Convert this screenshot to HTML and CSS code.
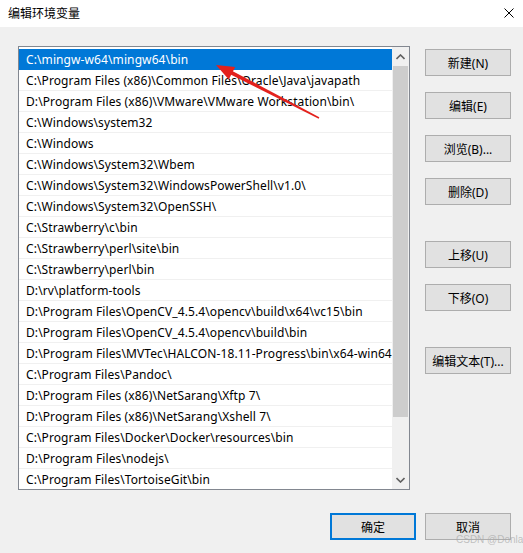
FILE: index.html
```html
<!DOCTYPE html>
<html lang="zh-CN">
<head>
<meta charset="UTF-8" />
<title>编辑环境变量</title>
<link rel="stylesheet" href="styles.css">
</head>
<body>

<div class="dialog">
  <div class="titlebar">
    <span class="title">编辑环境变量</span>
    <svg class="close" width="10" height="10" viewBox="0 0 10 10">
      <path d="M0.5 0.5 L9.5 9.5 M9.5 0.5 L0.5 9.5" stroke="#000" stroke-width="1" fill="none" />
    </svg>
  </div>

  <div class="content">
    <div class="main">
      <div class="listbox">
        <ul class="paths">
          <li class="selected">C:\mingw-w64\mingw64\bin</li>
          <li>C:\Program Files (x86)\Common Files\Oracle\Java\javapath</li>
          <li>D:\Program Files (x86)\VMware\VMware Workstation\bin\</li>
          <li>C:\Windows\system32</li>
          <li>C:\Windows</li>
          <li>C:\Windows\System32\Wbem</li>
          <li>C:\Windows\System32\WindowsPowerShell\v1.0\</li>
          <li>C:\Windows\System32\OpenSSH\</li>
          <li>C:\Strawberry\c\bin</li>
          <li>C:\Strawberry\perl\site\bin</li>
          <li>C:\Strawberry\perl\bin</li>
          <li>D:\rv\platform-tools</li>
          <li>D:\Program Files\OpenCV_4.5.4\opencv\build\x64\vc15\bin</li>
          <li>D:\Program Files\OpenCV_4.5.4\opencv\build\bin</li>
          <li>D:\Program Files\MVTec\HALCON-18.11-Progress\bin\x64-win64</li>
          <li>C:\Program Files\Pandoc\</li>
          <li>D:\Program Files (x86)\NetSarang\Xftp 7\</li>
          <li>D:\Program Files (x86)\NetSarang\Xshell 7\</li>
          <li>C:\Program Files\Docker\Docker\resources\bin</li>
          <li>D:\Program Files\nodejs\</li>
          <li>C:\Program Files\TortoiseGit\bin</li>
        </ul>
        <div class="scrollbar">
          <div class="arrow">
            <svg width="9" height="6" viewBox="0 0 9 6"><path d="M0.5 5 L4.5 1 L8.5 5" stroke="#606060" stroke-width="1.6" fill="none" /></svg>
          </div>
          <div class="track">
            <div class="thumb"></div>
          </div>
          <div class="arrow">
            <svg width="9" height="6" viewBox="0 0 9 6"><path d="M0.5 1 L4.5 5 L8.5 1" stroke="#606060" stroke-width="1.6" fill="none" /></svg>
          </div>
        </div>
      </div>

      <div class="side-buttons">
        <button>新建(N)</button>
        <button>编辑(E)</button>
        <button>浏览(B)...</button>
        <button>删除(D)</button>
        <button class="group-start">上移(U)</button>
        <button>下移(O)</button>
        <button class="group-start">编辑文本(T)...</button>
      </div>
    </div>

    <div class="footer">
      <button class="default">确定</button>
      <button>取消</button>
    </div>
  </div>

  <!-- 红色箭头标注 -->
  <svg class="annotation" width="523" height="553" viewBox="0 0 523 553">
    <polygon points="229.1,73.8 230.9,70.2 319.3,117.3 318.7,118.7" fill="#e3211c" />
    <polygon points="216,65 235.2,67 228.8,79.4" fill="#e3211c" />
  </svg>

  <span class="watermark">CSDN @Donla</span>
</div>

</body>
</html>
```

FILE: styles.css
```css
html, body {
  margin: 0;
  padding: 0;
}
body {
  font-family: "Noto Sans", "Noto Sans CJK SC", sans-serif;
  font-size: 12px;
  color: #000;
  background-color: #f0f0f0;
}
.dialog {
  position: relative;
  width: 523px;
  height: 553px;
  overflow: hidden;
  background-color: #f0f0f0;
}
.titlebar {
  height: 27px;
  background-color: #fff;
  display: flex;
  align-items: center;
  justify-content: space-between;
  padding: 0 8px 2px 8px;
  box-sizing: border-box;
}
.title {
  font-family: "Noto Sans CJK SC", sans-serif;
  font-size: 12px;
}
.close {
  margin-right: 1px;
}
.content {
  padding: 19px 0 0 18px;
}
.main {
  display: flex;
  gap: 15px;
}
.listbox {
  width: 392px;
  height: 444px;
  box-sizing: border-box;
  border: 1px solid #828790;
  background-color: #fff;
  display: flex;
  padding-top: 2px;
}
.paths {
  list-style: none;
  margin: 0;
  padding: 0;
  flex: 1;
  overflow: hidden;
}
.paths li {
  height: 21px;
  line-height: 20px;
  box-sizing: border-box;
  border-bottom: 1px solid #f0f0f0;
  padding: 1px 0 0 7px;
  white-space: nowrap;
  overflow: hidden;
  letter-spacing: 0.1px;
}
.paths li.selected {
  background-color: #0078d7;
  color: #fff;
  border-bottom-color: #0078d7;
}
.scrollbar {
  width: 17px;
  margin-top: -2px;
  background-color: #f0f0f0;
  display: flex;
  flex-direction: column;
}
.arrow {
  height: 19px;
  display: flex;
  align-items: center;
  justify-content: center;
}
.track {
  flex: 1;
}
.thumb {
  height: 351px;
  margin: 0 1px;
  background-color: #cdcdcd;
}
.side-buttons {
  display: flex;
  flex-direction: column;
  gap: 16px;
  padding-top: 3px;
}
.side-buttons .group-start {
  margin-top: 20px;
}
button {
  width: 86px;
  height: 27px;
  padding: 0;
  font-family: "Noto Sans", "Noto Sans CJK SC", sans-serif;
  font-size: 12px;
  color: #000;
  background-color: #e1e1e1;
  border: 1px solid #adadad;
  border-radius: 0;
}
button.default {
  border: 2px solid #0078d7;
}
.footer {
  display: flex;
  justify-content: flex-end;
  gap: 9px;
  padding: 23px 12px 0 0;
}
.annotation {
  position: absolute;
  left: 0;
  top: 0;
  pointer-events: none;
}
.watermark {
  position: absolute;
  left: 456px;
  top: 534px;
  white-space: nowrap;
  font-family: "Liberation Sans", sans-serif;
  font-size: 10px;
  color: rgba(170, 170, 170, 0.7);
}
```
